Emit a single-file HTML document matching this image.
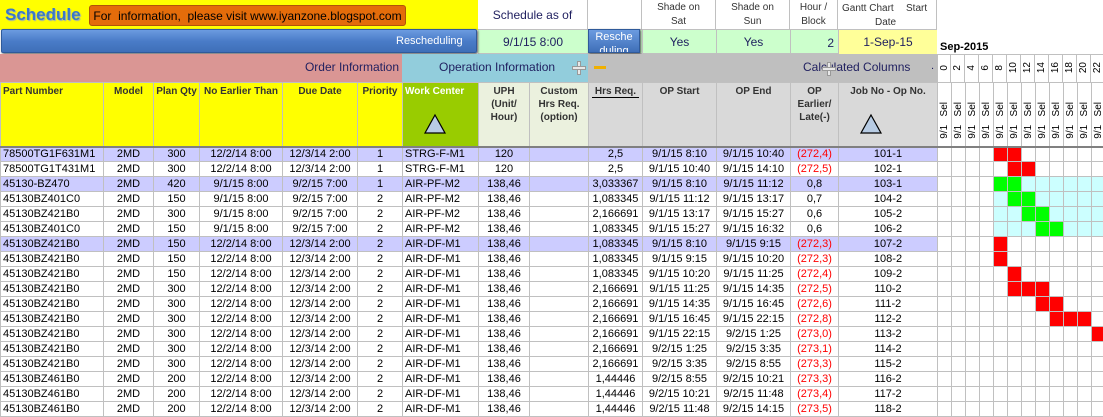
<!DOCTYPE html>
<html><head><meta charset="utf-8"><style>
*{margin:0;padding:0;box-sizing:border-box}
body{width:1103px;height:413px;overflow:hidden;background:#fff;font-family:"Liberation Sans",Arial,sans-serif;font-size:11px;color:#000;position:relative}
.a{position:absolute}
.c{display:flex;align-items:center;justify-content:center}
table{position:absolute;left:0;top:82px;border-collapse:collapse;table-layout:fixed;width:1105px}
td{border:1px solid #c0c0c0;height:15px;padding:0 2px;white-space:nowrap;overflow:hidden;text-align:center;font-size:11px;line-height:13px}
tr.h td{height:64px;vertical-align:top;font-weight:bold;color:#333;font-size:10px;line-height:13px;padding-top:2px;border-bottom:2px solid #808080}
tr.l td.d{background:#ccccff}
td.l{text-align:left}
.red{color:#f00}
.R{background:#f00}.G{background:#0f0}.C{background:#ccffff}
.vt{writing-mode:vertical-rl;transform:rotate(180deg);font-size:10px;font-weight:normal;color:#000}
</style></head><body>
<div class="a" style="left:0;top:0;width:478px;height:30px;background:#ffff00"></div>
<div class="a" style="left:5px;top:5px;font-size:17px;font-weight:bold;color:#3b78c8;text-shadow:1px 1px 1px #9ab">Schedule</div>
<div class="a c" style="left:89px;top:5px;width:317px;height:21px;background:#e46c0a;border:1px solid #b05408;border-radius:3px;font-size:12px;color:#000">For&nbsp; information,&nbsp; please visit www.iyanzone.blogspot.com</div>
<div class="a" style="left:478px;top:0;width:459px;height:30px;border-bottom:1px solid #c0c0c0"></div>
<div class="a c" style="left:478px;top:0;width:110px;height:30px;font-size:12px;color:#1f1f5f;border-right:1px solid #c0c0c0">Schedule as of</div>
<div class="a" style="left:588px;top:0;width:54px;height:30px;border-right:1px solid #c0c0c0"></div>
<div class="a c" style="left:642px;top:0;width:74px;height:30px;font-size:10px;text-align:center;line-height:14px;color:#333;border-right:1px solid #c0c0c0">Shade on<br>Sat</div>
<div class="a c" style="left:716px;top:0;width:74px;height:30px;font-size:10px;text-align:center;line-height:14px;color:#333;border-right:1px solid #c0c0c0">Shade on<br>Sun</div>
<div class="a c" style="left:790px;top:0;width:48px;height:30px;font-size:10px;text-align:center;line-height:14px;color:#333;border-right:1px solid #c0c0c0">Hour /<br>Block</div>
<div class="a" style="left:838px;top:0;width:99px;height:30px;font-size:10px;line-height:14px;color:#333;border-right:1px solid #c0c0c0"><span class="a" style="left:4px;top:2px">Gantt Chart</span><span class="a" style="left:68px;top:2px">Start</span><span class="a" style="left:37px;top:16px">Date</span></div>
<div class="a" style="left:478px;top:30px;width:459px;height:24px;background:#ccffcc;border-bottom:1px solid #c0c0c0"></div>
<div class="a" style="left:1px;top:29px;width:476px;height:24px;background:linear-gradient(#6b9be0,#4a7cc8 50%,#3f6fb8);border:1px solid #2f5a9a;border-radius:2px;box-shadow:1px 1px 2px #555"></div>
<div class="a" style="left:396px;top:35px;color:#fff;font-size:11px">Rescheduling</div>
<div class="a c" style="left:478px;top:30px;width:110px;height:24px;font-size:12px;color:#1f1f5f">9/1/15 8:00</div>
<div class="a" style="left:588px;top:29px;width:52px;height:24px;background:linear-gradient(#6b9be0,#3f6fb8);border:1px solid #2f5a9a;box-shadow:1px 1px 2px #555;color:#fff;font-size:11px;line-height:14px;text-align:center;overflow:hidden">Resche<br>duling</div>
<div class="a c" style="left:642px;top:30px;width:74px;height:24px;font-size:12px;color:#1f1f5f;border-left:1px solid #c0c0c0">Yes</div>
<div class="a c" style="left:716px;top:30px;width:74px;height:24px;font-size:12px;color:#1f1f5f;border-left:1px solid #c0c0c0">Yes</div>
<div class="a" style="left:790px;top:30px;width:48px;height:24px;font-size:12px;color:#1f1f5f;border-left:1px solid #c0c0c0;text-align:right;padding:6px 4px 0 0">2</div>
<div class="a c" style="left:838px;top:30px;width:99px;height:24px;font-size:12px;color:#1f1f5f;background:#ffff99;border-left:1px solid #c0c0c0">1-Sep-15</div>
<div class="a" style="left:940px;top:41px;font-size:11px;font-weight:bold">Sep-2015</div>
<div class="a" style="left:0;top:54px;width:402px;height:28px;background:#da9694;font-size:12px;color:#1f1f5f;text-align:right;padding:6px 3px 0 0">Order Information</div>
<div class="a" style="left:402px;top:54px;width:186px;height:28px;background:#92cddc;font-size:12px;color:#1f1f5f;padding:6px 0 0 37px">Operation Information</div>
<div class="a" style="left:588px;top:54px;width:349px;height:28px;background:#bfbfbf;font-size:12px;color:#1f1f5f;padding:6px 0 0 215px">Calculated Columns</div>
<div class="a" style="left:931px;top:60px;color:#1f1f5f">.</div>
<div class="a" style="left:572px;top:61px;width:14px;height:14px;"><div class="a" style="left:5px;top:0;width:4px;height:14px;background:#e8e8e8;border:1px solid #999"></div><div class="a" style="left:0;top:5px;width:14px;height:4px;background:#e8e8e8;border:1px solid #999"></div></div>
<div class="a" style="left:822px;top:62px;width:14px;height:14px;"><div class="a" style="left:5px;top:0;width:4px;height:14px;background:#e8e8e8;border:1px solid #999"></div><div class="a" style="left:0;top:5px;width:14px;height:4px;background:#e8e8e8;border:1px solid #999"></div></div>
<div class="a" style="left:594px;top:66px;width:12px;height:3px;background:#f0b000"></div>
<div class="a" style="left:937px;top:54px;width:168px;height:28px;border-top:1px solid #c0c0c0"></div>
<div class="a" style="left:937px;top:54px;display:flex">
<div style="width:14px;height:28px;border-right:1px solid #c0c0c0;border-left:1px solid #c0c0c0" class="c"><span class="vt">0</span></div>
<div style="width:14px;height:28px;border-right:1px solid #c0c0c0" class="c"><span class="vt">2</span></div>
<div style="width:14px;height:28px;border-right:1px solid #c0c0c0" class="c"><span class="vt">4</span></div>
<div style="width:14px;height:28px;border-right:1px solid #c0c0c0" class="c"><span class="vt">6</span></div>
<div style="width:14px;height:28px;border-right:1px solid #c0c0c0" class="c"><span class="vt">8</span></div>
<div style="width:14px;height:28px;border-right:1px solid #c0c0c0" class="c"><span class="vt">10</span></div>
<div style="width:14px;height:28px;border-right:1px solid #c0c0c0" class="c"><span class="vt">12</span></div>
<div style="width:14px;height:28px;border-right:1px solid #c0c0c0" class="c"><span class="vt">14</span></div>
<div style="width:14px;height:28px;border-right:1px solid #c0c0c0" class="c"><span class="vt">16</span></div>
<div style="width:14px;height:28px;border-right:1px solid #c0c0c0" class="c"><span class="vt">18</span></div>
<div style="width:14px;height:28px;border-right:1px solid #c0c0c0" class="c"><span class="vt">20</span></div>
<div style="width:14px;height:28px;border-right:1px solid #c0c0c0" class="c"><span class="vt">22</span></div>
</div>

<table>
<colgroup><col style="width:103px"><col style="width:50px"><col style="width:46px"><col style="width:83px"><col style="width:75px"><col style="width:45px"><col style="width:76px"><col style="width:51px"><col style="width:59px"><col style="width:54px"><col style="width:74px"><col style="width:74px"><col style="width:48px"><col style="width:99px"><col style="width:14px"><col style="width:14px"><col style="width:14px"><col style="width:14px"><col style="width:14px"><col style="width:14px"><col style="width:14px"><col style="width:14px"><col style="width:14px"><col style="width:14px"><col style="width:14px"><col style="width:14px"></colgroup>
<tr class="h">
<td class="l" style="background:#ff0">Part Number</td><td style="background:#ff0">Model</td><td style="background:#ff0">Plan Qty</td><td style="background:#ff0">No Earlier Than</td><td style="background:#ff0">Due Date</td><td style="background:#ff0">Priority</td>
<td class="l" style="background:#99cc00;color:#fff;position:relative">Work Center<svg style="position:absolute;left:20px;top:30px" width="24" height="22"><polygon points="12,2 22,20 2,20" fill="#b8cce4" stroke="#000" stroke-width="1.2"/></svg></td>
<td style="background:#ebf1de">UPH<br>(Unit/<br>Hour)</td><td style="background:#ebf1de">Custom<br>Hrs Req.<br>(option)</td>
<td style="background:#d9d9d9"><span style="border-bottom:1px solid #000">&nbsp;Hrs Req.&nbsp;</span></td><td style="background:#d9d9d9">OP Start</td><td style="background:#d9d9d9">OP End</td><td style="background:#d9d9d9">OP<br>Earlier/<br>Late(-)</td>
<td style="background:#d9d9d9;position:relative">Job No - Op No.<svg style="position:absolute;left:20px;top:30px" width="24" height="22"><polygon points="12,2 22,20 2,20" fill="#b8cce4" stroke="#000" stroke-width="1.2"/></svg></td>
<td style="vertical-align:bottom;padding:0 0 3px 0"><span class="vt">9/1&nbsp;&nbsp; Sel</span></td><td style="vertical-align:bottom;padding:0 0 3px 0"><span class="vt">9/1&nbsp;&nbsp; Sel</span></td><td style="vertical-align:bottom;padding:0 0 3px 0"><span class="vt">9/1&nbsp;&nbsp; Sel</span></td><td style="vertical-align:bottom;padding:0 0 3px 0"><span class="vt">9/1&nbsp;&nbsp; Sel</span></td><td style="vertical-align:bottom;padding:0 0 3px 0"><span class="vt">9/1&nbsp;&nbsp; Sel</span></td><td style="vertical-align:bottom;padding:0 0 3px 0"><span class="vt">9/1&nbsp;&nbsp; Sel</span></td><td style="vertical-align:bottom;padding:0 0 3px 0"><span class="vt">9/1&nbsp;&nbsp; Sel</span></td><td style="vertical-align:bottom;padding:0 0 3px 0"><span class="vt">9/1&nbsp;&nbsp; Sel</span></td><td style="vertical-align:bottom;padding:0 0 3px 0"><span class="vt">9/1&nbsp;&nbsp; Sel</span></td><td style="vertical-align:bottom;padding:0 0 3px 0"><span class="vt">9/1&nbsp;&nbsp; Sel</span></td><td style="vertical-align:bottom;padding:0 0 3px 0"><span class="vt">9/1&nbsp;&nbsp; Sel</span></td><td style="vertical-align:bottom;padding:0 0 3px 0"><span class="vt">9/1&nbsp;&nbsp; Sel</span></td>
</tr>
<tr class="l"><td class="d l">78500TG1F631M1</td><td class="d">2MD</td><td class="d">300</td><td class="d">12/2/14 8:00</td><td class="d">12/3/14 2:00</td><td class="d">1</td><td class="d l">STRG-F-M1</td><td class="d">120</td><td class="d"></td><td class="d">2,5</td><td class="d">9/1/15 8:10</td><td class="d">9/1/15 10:40</td><td class="d red">(272,4)</td><td class="d">101-1</td><td></td><td></td><td></td><td></td><td class="R"></td><td class="R"></td><td></td><td></td><td></td><td></td><td></td><td></td></tr>
<tr><td class="l">78500TG1T431M1</td><td>2MD</td><td>300</td><td>12/2/14 8:00</td><td>12/3/14 2:00</td><td>1</td><td class="l">STRG-F-M1</td><td>120</td><td></td><td>2,5</td><td>9/1/15 10:40</td><td>9/1/15 14:10</td><td class="red">(272,5)</td><td>102-1</td><td></td><td></td><td></td><td></td><td></td><td class="R"></td><td class="R"></td><td></td><td></td><td></td><td></td><td></td></tr>
<tr class="l"><td class="d l">45130-BZ470</td><td class="d">2MD</td><td class="d">420</td><td class="d">9/1/15 8:00</td><td class="d">9/2/15 7:00</td><td class="d">1</td><td class="d l">AIR-PF-M2</td><td class="d">138,46</td><td class="d"></td><td class="d">3,033367</td><td class="d">9/1/15 8:10</td><td class="d">9/1/15 11:12</td><td class="d">0,8</td><td class="d">103-1</td><td></td><td></td><td></td><td></td><td class="G"></td><td class="G"></td><td class="C"></td><td class="C"></td><td class="C"></td><td class="C"></td><td class="C"></td><td class="C"></td></tr>
<tr><td class="l">45130BZ401C0</td><td>2MD</td><td>150</td><td>9/1/15 8:00</td><td>9/2/15 7:00</td><td>2</td><td class="l">AIR-PF-M2</td><td>138,46</td><td></td><td>1,083345</td><td>9/1/15 11:12</td><td>9/1/15 13:17</td><td>0,7</td><td>104-2</td><td></td><td></td><td></td><td></td><td class="C"></td><td class="G"></td><td class="G"></td><td class="C"></td><td class="C"></td><td class="C"></td><td class="C"></td><td class="C"></td></tr>
<tr><td class="l">45130BZ421B0</td><td>2MD</td><td>300</td><td>9/1/15 8:00</td><td>9/2/15 7:00</td><td>2</td><td class="l">AIR-PF-M2</td><td>138,46</td><td></td><td>2,166691</td><td>9/1/15 13:17</td><td>9/1/15 15:27</td><td>0,6</td><td>105-2</td><td></td><td></td><td></td><td></td><td class="C"></td><td class="C"></td><td class="G"></td><td class="G"></td><td class="C"></td><td class="C"></td><td class="C"></td><td class="C"></td></tr>
<tr><td class="l">45130BZ401C0</td><td>2MD</td><td>150</td><td>9/1/15 8:00</td><td>9/2/15 7:00</td><td>2</td><td class="l">AIR-PF-M2</td><td>138,46</td><td></td><td>1,083345</td><td>9/1/15 15:27</td><td>9/1/15 16:32</td><td>0,6</td><td>106-2</td><td></td><td></td><td></td><td></td><td class="C"></td><td class="C"></td><td class="C"></td><td class="G"></td><td class="G"></td><td class="C"></td><td class="C"></td><td class="C"></td></tr>
<tr class="l"><td class="d l">45130BZ421B0</td><td class="d">2MD</td><td class="d">150</td><td class="d">12/2/14 8:00</td><td class="d">12/3/14 2:00</td><td class="d">2</td><td class="d l">AIR-DF-M1</td><td class="d">138,46</td><td class="d"></td><td class="d">1,083345</td><td class="d">9/1/15 8:10</td><td class="d">9/1/15 9:15</td><td class="d red">(272,3)</td><td class="d">107-2</td><td></td><td></td><td></td><td></td><td class="R"></td><td></td><td></td><td></td><td></td><td></td><td></td><td></td></tr>
<tr><td class="l">45130BZ421B0</td><td>2MD</td><td>150</td><td>12/2/14 8:00</td><td>12/3/14 2:00</td><td>2</td><td class="l">AIR-DF-M1</td><td>138,46</td><td></td><td>1,083345</td><td>9/1/15 9:15</td><td>9/1/15 10:20</td><td class="red">(272,3)</td><td>108-2</td><td></td><td></td><td></td><td></td><td class="R"></td><td></td><td></td><td></td><td></td><td></td><td></td><td></td></tr>
<tr><td class="l">45130BZ421B0</td><td>2MD</td><td>150</td><td>12/2/14 8:00</td><td>12/3/14 2:00</td><td>2</td><td class="l">AIR-DF-M1</td><td>138,46</td><td></td><td>1,083345</td><td>9/1/15 10:20</td><td>9/1/15 11:25</td><td class="red">(272,4)</td><td>109-2</td><td></td><td></td><td></td><td></td><td></td><td class="R"></td><td></td><td></td><td></td><td></td><td></td><td></td></tr>
<tr><td class="l">45130BZ421B0</td><td>2MD</td><td>300</td><td>12/2/14 8:00</td><td>12/3/14 2:00</td><td>2</td><td class="l">AIR-DF-M1</td><td>138,46</td><td></td><td>2,166691</td><td>9/1/15 11:25</td><td>9/1/15 14:35</td><td class="red">(272,5)</td><td>110-2</td><td></td><td></td><td></td><td></td><td></td><td class="R"></td><td class="R"></td><td class="R"></td><td></td><td></td><td></td><td></td></tr>
<tr><td class="l">45130BZ421B0</td><td>2MD</td><td>300</td><td>12/2/14 8:00</td><td>12/3/14 2:00</td><td>2</td><td class="l">AIR-DF-M1</td><td>138,46</td><td></td><td>2,166691</td><td>9/1/15 14:35</td><td>9/1/15 16:45</td><td class="red">(272,6)</td><td>111-2</td><td></td><td></td><td></td><td></td><td></td><td></td><td></td><td class="R"></td><td class="R"></td><td></td><td></td><td></td></tr>
<tr><td class="l">45130BZ421B0</td><td>2MD</td><td>300</td><td>12/2/14 8:00</td><td>12/3/14 2:00</td><td>2</td><td class="l">AIR-DF-M1</td><td>138,46</td><td></td><td>2,166691</td><td>9/1/15 16:45</td><td>9/1/15 22:15</td><td class="red">(272,8)</td><td>112-2</td><td></td><td></td><td></td><td></td><td></td><td></td><td></td><td></td><td class="R"></td><td class="R"></td><td class="R"></td><td></td></tr>
<tr><td class="l">45130BZ421B0</td><td>2MD</td><td>300</td><td>12/2/14 8:00</td><td>12/3/14 2:00</td><td>2</td><td class="l">AIR-DF-M1</td><td>138,46</td><td></td><td>2,166691</td><td>9/1/15 22:15</td><td>9/2/15 1:25</td><td class="red">(273,0)</td><td>113-2</td><td></td><td></td><td></td><td></td><td></td><td></td><td></td><td></td><td></td><td></td><td></td><td class="R"></td></tr>
<tr><td class="l">45130BZ421B0</td><td>2MD</td><td>300</td><td>12/2/14 8:00</td><td>12/3/14 2:00</td><td>2</td><td class="l">AIR-DF-M1</td><td>138,46</td><td></td><td>2,166691</td><td>9/2/15 1:25</td><td>9/2/15 3:35</td><td class="red">(273,1)</td><td>114-2</td><td></td><td></td><td></td><td></td><td></td><td></td><td></td><td></td><td></td><td></td><td></td><td></td></tr>
<tr><td class="l">45130BZ421B0</td><td>2MD</td><td>300</td><td>12/2/14 8:00</td><td>12/3/14 2:00</td><td>2</td><td class="l">AIR-DF-M1</td><td>138,46</td><td></td><td>2,166691</td><td>9/2/15 3:35</td><td>9/2/15 8:55</td><td class="red">(273,3)</td><td>115-2</td><td></td><td></td><td></td><td></td><td></td><td></td><td></td><td></td><td></td><td></td><td></td><td></td></tr>
<tr><td class="l">45130BZ461B0</td><td>2MD</td><td>200</td><td>12/2/14 8:00</td><td>12/3/14 2:00</td><td>2</td><td class="l">AIR-DF-M1</td><td>138,46</td><td></td><td>1,44446</td><td>9/2/15 8:55</td><td>9/2/15 10:21</td><td class="red">(273,3)</td><td>116-2</td><td></td><td></td><td></td><td></td><td></td><td></td><td></td><td></td><td></td><td></td><td></td><td></td></tr>
<tr><td class="l">45130BZ461B0</td><td>2MD</td><td>200</td><td>12/2/14 8:00</td><td>12/3/14 2:00</td><td>2</td><td class="l">AIR-DF-M1</td><td>138,46</td><td></td><td>1,44446</td><td>9/2/15 10:21</td><td>9/2/15 11:48</td><td class="red">(273,4)</td><td>117-2</td><td></td><td></td><td></td><td></td><td></td><td></td><td></td><td></td><td></td><td></td><td></td><td></td></tr>
<tr><td class="l">45130BZ461B0</td><td>2MD</td><td>200</td><td>12/2/14 8:00</td><td>12/3/14 2:00</td><td>2</td><td class="l">AIR-DF-M1</td><td>138,46</td><td></td><td>1,44446</td><td>9/2/15 11:48</td><td>9/2/15 14:15</td><td class="red">(273,5)</td><td>118-2</td><td></td><td></td><td></td><td></td><td></td><td></td><td></td><td></td><td></td><td></td><td></td><td></td></tr>
</table>
</body></html>
